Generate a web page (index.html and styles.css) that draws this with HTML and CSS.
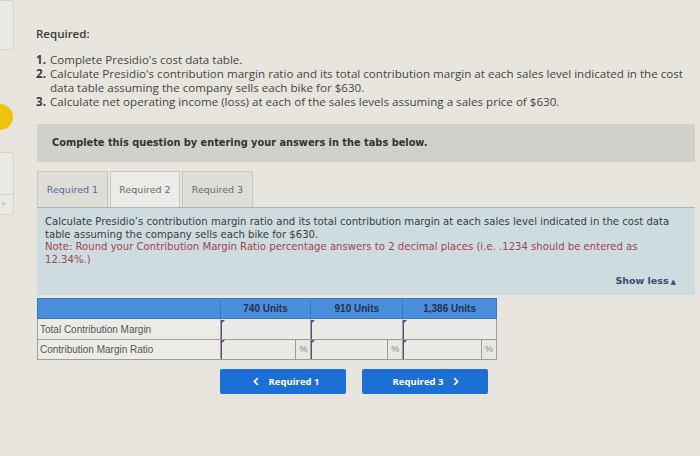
FILE: index.html
```html
<!DOCTYPE html>
<html>
<head>
<meta charset="utf-8">
<link rel="stylesheet" href="styles.css">
</head>
<body>
<div class="page">
  <aside class="rail">
    <div class="rail-box rail-top"></div>
    <div class="rail-dot"></div>
    <div class="rail-box rail-low">
      <div class="rail-sep"></div>
      <span class="rail-s">s</span>
    </div>
  </aside>
  <main class="main">
    <h2 class="req-title">Required:</h2>
    <ol class="req-list">
      <li><span class="num">1.</span><span class="txt">Complete Presidio's cost data table.</span></li>
      <li><span class="num">2.</span><span class="txt">Calculate Presidio's contribution margin ratio and its total contribution margin at each sales level indicated in the cost data table assuming the company sells each bike for $630.</span></li>
      <li><span class="num">3.</span><span class="txt">Calculate net operating income (loss) at each of the sales levels assuming a sales price of $630.</span></li>
    </ol>
    <div class="prompt">Complete this question by entering your answers in the tabs below.</div>
    <div class="tabs">
      <div class="tab tab-first">Required 1</div>
      <div class="tab tab-active">Required 2</div>
      <div class="tab">Required 3</div>
    </div>
    <section class="panel">
      <p class="instr">Calculate Presidio’s contribution margin ratio and its total contribution margin at each sales level indicated in the cost data<br>table assuming the company sells each bike for $630.</p>
      <p class="note">Note: Round your Contribution Margin Ratio percentage answers to 2 decimal places (i.e. .1234 should be entered as<br>12.34%.)</p>
      <div class="show-less">Show less<span class="tri">▲</span></div>
    </section>
    <table class="grid">
      <colgroup><col class="c-label"><col class="c-val"><col class="c-val2"><col class="c-val3"></colgroup>
      <thead>
        <tr><th></th><th>740 Units</th><th>910 Units</th><th>1,386 Units</th></tr>
      </thead>
      <tbody>
        <tr>
          <td class="label">Total Contribution Margin</td>
          <td class="in"><div class="field"></div></td>
          <td class="in"><div class="field"></div></td>
          <td class="in"><div class="field"></div></td>
        </tr>
        <tr>
          <td class="label">Contribution Margin Ratio</td>
          <td class="in"><div class="field-row"><div class="field"></div><span class="pct">%</span></div></td>
          <td class="in"><div class="field-row"><div class="field"></div><span class="pct">%</span></div></td>
          <td class="in"><div class="field-row"><div class="field"></div><span class="pct">%</span></div></td>
        </tr>
      </tbody>
    </table>
    <div class="nav">
      <button class="btn"><svg class="chev" width="6" height="9" viewBox="0 0 6 9"><path d="M4.8 1 L1.5 4.5 L4.8 8" fill="none" stroke="#fff" stroke-width="1.8"/></svg><span>Required 1</span></button>
      <button class="btn"><span>Required 3</span><svg class="chev" width="6" height="9" viewBox="0 0 6 9"><path d="M1.2 1 L4.5 4.5 L1.2 8" fill="none" stroke="#fff" stroke-width="1.8"/></svg></button>
    </div>
  </main>
</div>
</body>
</html>
```
FILE: styles.css
```css
* { box-sizing: border-box; }
html, body { margin: 0; padding: 0; }
body {
  width: 700px;
  height: 456px;
  overflow: hidden;
  background: #e8e5de;
  font-family: "Open Sans", Lato, sans-serif;
  color: #3f3f3f;
}
.page { display: flex; height: 456px; }

.rail { width: 14px; flex: none; display: flex; flex-direction: column; }
.rail-box {
  background: #ebe9e4;
  border: 1px solid #d5d3cc;
  border-left: none;
  border-radius: 0 3px 3px 0;
}
.rail-top { height: 50px; }
.rail-dot {
  width: 26px; height: 26px; border-radius: 50%;
  background: #efc20f;
  margin: 54px 0 0 -13px;
  flex: none;
}
.rail-low { margin-top: 22px; height: 63px; display: flex; flex-direction: column; }
.rail-sep { height: 42px; border-bottom: 1px solid #d5d3cc; }
.rail-s { font-size: 6px; color: #8a8a8a; padding: 4px 0 0 2px; line-height: 8px; }

.main { margin-left: 22px; width: 659px; display: flex; flex-direction: column; }

.req-title { margin: 27px 0 0; font-size: 11.5px; font-weight: 600; line-height: 13px; color: #3a3a3a; }
.req-list { list-style: none; margin: 13px 0 0; padding: 0; font-size: 11.6px; line-height: 14px; color: #454545; }
.req-list li { display: flex; }
.num { width: 14px; flex: none; font-weight: 700; color: #3a3a3a; }
.txt { flex: 1; padding-right: 8px; }

.prompt {
  margin: 15px 0 0 1px;
  height: 38px;
  background: #d2d0ca;
  padding-left: 15px;
  font: bold 9.8px/38px "DejaVu Sans", sans-serif;
  color: #333;
}

.tabs { display: flex; gap: 2px; margin: 9px 0 0 1px; }
.tab {
  width: 71px; height: 36px;
  border: 1px solid #c9c7c1; border-bottom: none;
  background: #dfddd7;
  font: 9.5px/35px "DejaVu Sans", sans-serif;
  text-align: center;
  color: #6a6a6a;
}
.tab-first { color: #5b67a3; }
.tab-active { background: #ecebe7; width: 70px; }

.panel {
  margin-left: 1px;
  background: #cedcdf;
  border-top: 1px solid #a8b7bc;
  padding: 8px 12px 7px 8px;
  font: 10.1px/12.5px "DejaVu Sans", sans-serif;
  color: #3b3b3b;
}
.panel p { margin: 0; }
.note { color: #a0434f; }
.show-less {
  margin-top: 9px;
  padding-right: 7px;
  text-align: right;
  font-weight: bold;
  font-size: 9.5px;
  line-height: 12px;
  color: #3c4878;
}
.tri { font-size: 7px; margin-left: 2px; }

.grid {
  margin: 3px 0 0 1px;
  width: 460px;
  border-collapse: collapse;
  font-family: "Liberation Sans", Arial, sans-serif;
  font-size: 10px;
}
.c-label { width: 183px; }
.c-val { width: 91px; }
.c-val2 { width: 92px; }
.c-val3 { width: 94px; }
.grid th {
  height: 20px;
  background: #4a8fdc;
  border: 1px solid #3d78bd;
  color: #25304a;
  font-weight: bold;
  text-align: center;
  padding: 0;
}
.grid td { border: 1px solid #9d9d9b; padding: 0; height: 20px; }
.grid tbody tr:first-child td { height: 21px; }
.label { background: #ecebe6; color: #555; padding-left: 2px !important; }
.in { background: #eceae6; }
.field {
  position: relative;
  height: 100%;
  border-left: 1px solid #4d5566;
  flex: 1;
}
.field::before {
  content: "";
  position: absolute; left: 0; top: 0;
  border-top: 3px solid #2f5fa6;
  border-right: 3px solid transparent;
}
.in > .field { height: 19px; }
.field-row { display: flex; height: 19px; }
.pct {
  width: 15px; flex: none;
  border-left: 1px solid #9d9d9b;
  background: #e9e7e2;
  color: #888;
  text-align: center;
  line-height: 19px;
  font-size: 9px;
}

.nav { display: flex; gap: 16px; margin: 9px 0 0 184px; }
.btn {
  width: 126px; height: 25px;
  border: none; border-radius: 2px;
  background: #1b6fd5;
  color: #fff;
  font: bold 9.5px "Open Sans", Lato, sans-serif;
  display: flex; align-items: center; justify-content: center; gap: 10px;
  padding: 0;
}
.nav .btn:first-child { padding-left: 6px; }
.nav .btn:last-child { padding-left: 2px; }
.chev { display: block; }
```
